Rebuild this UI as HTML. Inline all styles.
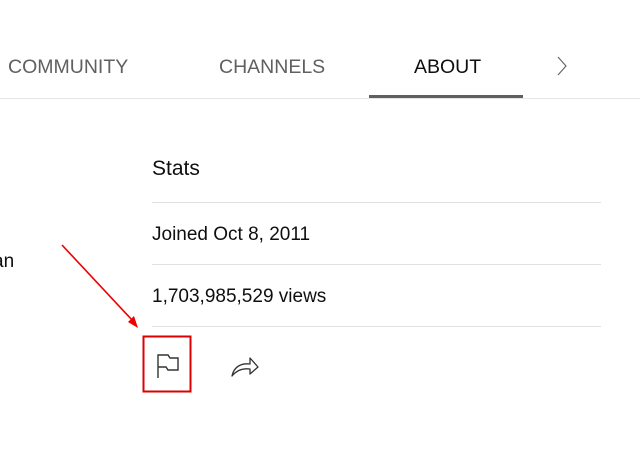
<!DOCTYPE html>
<html><head><style>
body{margin:0;width:640px;height:469px;background:#fff;font-family:"Liberation Sans",sans-serif;position:relative;overflow:hidden}
.t{position:absolute;white-space:nowrap}
.tab{font-size:19.5px;color:#606060;top:56px}
.hr{position:absolute;height:1px;background:#e0e0e0}
</style></head><body>
<div class="t tab" style="left:8px">COMMUNITY</div>
<div class="t tab" style="left:219px">CHANNELS</div>
<div class="t tab" style="left:414px;color:#0f0f0f">ABOUT</div>
<svg style="position:absolute;left:554px;top:55px" width="16" height="22"><path d="M4 2 L12 11 L4 20" fill="none" stroke="#606060" stroke-width="1.1"/></svg>
<div class="hr" style="left:0;top:98px;width:640px;background:#e5e5e5"></div>
<div style="position:absolute;left:369px;top:95px;width:154px;height:3px;background:#606060"></div>
<div class="t" style="left:152px;top:157px;font-size:21px;color:#0f0f0f">Stats</div>
<div class="hr" style="left:152px;top:202px;width:449px"></div>
<div class="t" style="left:152px;top:224px;font-size:19px;color:#0f0f0f">Joined Oct 8, 2011</div>
<div class="hr" style="left:152px;top:264px;width:449px"></div>
<div class="t" style="left:152px;top:286px;font-size:19px;color:#0f0f0f">1,703,985,529 views</div>
<div class="hr" style="left:152px;top:326px;width:449px"></div>
<div class="t" style="left:-7px;top:251px;font-size:19px;color:#0f0f0f">an</div>
<div class="t" style="left:-4px;top:297px;font-size:14px;color:#606060">:</div>
<svg style="position:absolute;left:0;top:0" width="640" height="469">
<line x1="62" y1="245" x2="133" y2="321" stroke="#e00" stroke-width="1.6"/>
<path d="M138 328 L128 322 L134 316 Z" fill="#e00"/>
<rect x="143.5" y="336.5" width="47" height="55" fill="none" stroke="#d00" stroke-width="2"/>
<path d="M158 378 V355 H168 L170 358 H178 V370 H168 L166 367 H158" fill="none" stroke="#333" stroke-width="1.4"/>
<path d="M232 376 C234 366 242 363 250 364 V358 L258 367 L250 374 V369 C242 368 236 371 232 376 Z" fill="none" stroke="#333" stroke-width="1.3" stroke-linejoin="round"/>
</svg>
</body></html>
